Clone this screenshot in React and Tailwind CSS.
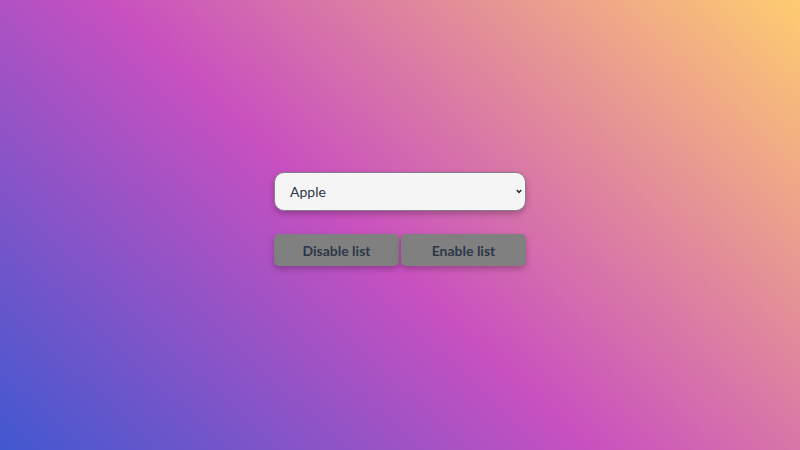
export default function App() {
  return (
    <div
      className="w-full h-screen flex flex-col items-center justify-center pb-[12px] bg-[linear-gradient(43deg,#4158D0_0%,#C850C0_46%,#FFCC70_100%)]"
      style={{ fontFamily: 'Lato, "Noto Sans", sans-serif' }}
    >
      <div className="w-[252px] flex flex-col gap-[23px]">
        <div className="relative">
          <select
            defaultValue="Apple"
            className="appearance-none w-[252px] h-[39px] rounded-[10px] border border-[#8a7a90] bg-[#f5f5f5] pl-[15px] pr-[16px] text-[14px] text-[#2d3748] shadow-[0_3px_6px_rgba(0,0,0,0.25)] outline-none"
          >
            <option>Apple</option>
            <option>Banana</option>
            <option>Cherry</option>
          </select>
          <svg
            className="absolute right-[4px] top-[17px] pointer-events-none"
            width="6"
            height="5"
            viewBox="0 0 6 5"
          >
            <path d="M0.8 1 L3 3.4 L5.2 1" fill="none" stroke="#222" strokeWidth="1.4" />
          </svg>
        </div>
        <div className="flex gap-[2px]">
          <button className="flex-1 h-[32px] rounded-[5px] bg-[#808080] text-[14px] font-bold text-[#2d3748] shadow-[0_3px_6px_rgba(0,0,0,0.25)]">
            Disable list
          </button>
          <button className="flex-1 h-[32px] rounded-[5px] bg-[#808080] text-[14px] font-bold text-[#2d3748] shadow-[0_3px_6px_rgba(0,0,0,0.25)]">
            Enable list
          </button>
        </div>
      </div>
    </div>
  );
}
